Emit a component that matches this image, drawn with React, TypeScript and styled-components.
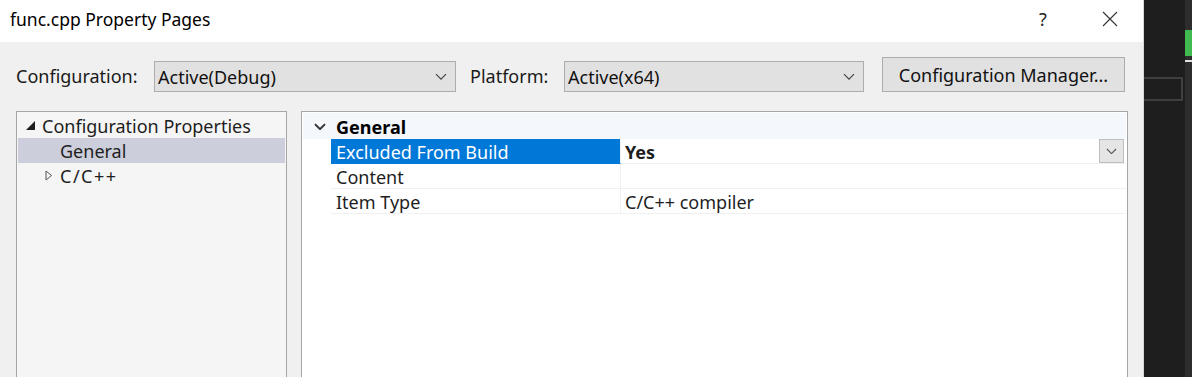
import React from "react";
import styled, { createGlobalStyle } from "styled-components";

const Global = createGlobalStyle`
  html, body { margin: 0; padding: 0; background: #1e1e1e; }
  body { font-family: "Noto Sans", "Open Sans", sans-serif; font-size: 18px; color: #000; }
  * { box-sizing: border-box; }
`;

const Screen = styled.div`
  display: flex;
  width: 1192px;
  height: 377px;
  overflow: hidden;
`;

const Dialog = styled.div`
  width: 1144px;
  height: 377px;
  background: #f0f0f0;
  display: flex;
  flex-direction: column;
  border-right: 1px solid #d8d8d8;
`;

const TitleBar = styled.div`
  height: 42px;
  background: #fff;
  display: flex;
  align-items: center;
  padding-left: 10px;
`;

const Title = styled.div`
  flex: 1;
  font-size: 17.5px;
  margin-top: -4px;
`;

const TitleButton = styled.div<{ $w: number; $mr: number }>`
  width: ${(p) => p.$w}px;
  margin-right: ${(p) => p.$mr}px;
  display: flex;
  align-items: center;
  justify-content: center;
  font-size: 18px;
  color: #222;
  margin-top: -4px;
`;

const Body = styled.div`
  flex: 1;
  display: flex;
  flex-direction: column;
  padding: 15px 0 0 16px;
`;

const Toolbar = styled.div`
  display: flex;
  align-items: flex-end;
  height: 35px;
`;

const Label = styled.div<{ $w: number }>`
  width: ${(p) => p.$w}px;
  height: 31px;
  line-height: 31px;
  font-size: 18px;
  color: #1a1a1a;
`;

const Combo = styled.div<{ $w: number; $mr: number }>`
  width: ${(p) => p.$w}px;
  margin-right: ${(p) => p.$mr}px;
  height: 31px;
  background: #e1e1e1;
  border: 1px solid #adadad;
  display: flex;
  align-items: center;
  padding-left: 3px;
  padding-right: 8px;
  font-size: 18px;
  color: #111;
`;

const ComboText = styled.div`
  flex: 1;
`;

const Button = styled.div`
  width: 243px;
  height: 35px;
  background: #e1e1e1;
  border: 1px solid #adadad;
  display: flex;
  align-items: center;
  justify-content: center;
  font-size: 18px;
  color: #111;
`;

const Panels = styled.div`
  display: flex;
  gap: 14px;
  margin-top: 19px;
  flex: 1;
`;

const Tree = styled.div`
  width: 271px;
  background: #f5f5f5;
  border: 1px solid #a6a6a6;
  border-bottom: none;
  padding: 1px 1px 0 1px;
  display: flex;
  flex-direction: column;
`;

const TreeRow = styled.div<{ $indent: number; $selected?: boolean }>`
  height: 25px;
  display: flex;
  align-items: center;
  padding-left: ${(p) => p.$indent}px;
  background: ${(p) => (p.$selected ? "#cccedb" : "transparent")};
  font-size: 18px;
  color: #1e1e1e;
`;

const Glyph = styled.span<{ $w: number }>`
  width: ${(p) => p.$w}px;
  display: inline-flex;
  align-items: center;
`;

const Wide = styled.span`
  letter-spacing: 1.5px;
`;

const Grid = styled.div`
  width: 827px;
  background: #fff;
  border: 1px solid #a6a6a6;
  border-bottom: none;
  padding: 1px 1px 0 1px;
  display: flex;
  flex-direction: column;
`;

const CategoryRow = styled.div`
  height: 26px;
  background: #f4f7fc;
  display: flex;
  align-items: center;
  font-weight: 700;
  font-size: 18px;
  padding-top: 1px;
`;

const CategoryToggle = styled.div`
  width: 33px;
  display: flex;
  align-items: center;
  justify-content: center;
`;

const PropRow = styled.div`
  height: 25px;
  display: flex;
  padding-left: 28px;
`;

const NameCell = styled.div<{ $selected?: boolean }>`
  width: 290px;
  display: flex;
  align-items: center;
  padding: 2px 0 0 5px;
  background: ${(p) => (p.$selected ? "#0078d7" : "#fff")};
  color: ${(p) => (p.$selected ? "#fff" : "#1e1e1e")};
  border-bottom: 1px solid ${(p) => (p.$selected ? "#0078d7" : "#f0f0f0")};
  border-right: 1px solid #f0f0f0;
  font-size: 18px;
`;

const ValueCell = styled.div<{ $bold?: boolean }>`
  flex: 1;
  display: flex;
  align-items: center;
  padding: 2px 0 0 4px;
  font-weight: ${(p) => (p.$bold ? 700 : 400)};
  border-bottom: 1px solid #f0f0f0;
  font-size: 18px;
  color: #1e1e1e;
`;

const ValueText = styled.div`
  flex: 1;
`;

const DropButton = styled.div`
  width: 25px;
  height: 24px;
  margin-top: -2px;
  background: #e5e5e5;
  border: 1px solid #bdbdbd;
  display: flex;
  align-items: center;
  justify-content: center;
  margin-right: 2px;
`;

const DarkSide = styled.div`
  width: 48px;
  height: 377px;
  display: flex;
  background: #1e1e1e;
`;

const DarkMain = styled.div`
  width: 41px;
  display: flex;
  flex-direction: column;
  padding-top: 77px;
`;

const DarkBox = styled.div`
  width: 39px;
  height: 24px;
  border: 2px solid #3f3f3f;
  border-left: none;
`;

const DarkStripe = styled.div`
  width: 7px;
  background: #2d2d2d;
  display: flex;
  flex-direction: column;
  padding-top: 30px;
`;

const GreenMark = styled.div`
  height: 26px;
  background: #3fb950;
`;

const WhiteMark = styled.div`
  height: 2px;
  margin-top: 4px;
  background: #e0e0e0;
`;

const Chevron = ({ size = 12, color = "#444", weight = 1.2 }: { size?: number; color?: string; weight?: number }) => (
  <svg width={size} height={size * 0.6} viewBox="0 0 12 7">
    <path d="M1 1 L6 6 L11 1" fill="none" stroke={color} strokeWidth={weight} />
  </svg>
);

export default function App() {
  return (
    <>
      <Global />
      <Screen>
        <Dialog>
          <TitleBar>
            <Title>func.cpp Property Pages</Title>
            <TitleButton $w={40} $mr={30}>?</TitleButton>
            <TitleButton $w={34} $mr={16}>
              <svg width="16" height="16" viewBox="0 0 16 16">
                <path d="M1 1 L15 15 M15 1 L1 15" stroke="#333" strokeWidth="1.1" />
              </svg>
            </TitleButton>
          </TitleBar>
          <Body>
            <Toolbar>
              <Label $w={138}>Configuration:</Label>
              <Combo $w={302} $mr={14}>
                <ComboText>Active(Debug)</ComboText>
                <Chevron />
              </Combo>
              <Label $w={94}>Platform:</Label>
              <Combo $w={300} $mr={18}>
                <ComboText>Active(x64)</ComboText>
                <Chevron />
              </Combo>
              <Button>Configuration Manager...</Button>
            </Toolbar>
            <Panels>
              <Tree>
                <TreeRow $indent={8}>
                  <Glyph $w={16}>
                    <svg width="9" height="9" viewBox="0 0 9 9">
                      <path d="M9 0 L9 9 L0 9 Z" fill="#1e1e1e" />
                    </svg>
                  </Glyph>
                  Configuration Properties
                </TreeRow>
                <TreeRow $indent={42} $selected>
                  General
                </TreeRow>
                <TreeRow $indent={27}>
                  <Glyph $w={15}>
                    <svg width="8" height="11" viewBox="0 0 8 11">
                      <path d="M1 1 L6.5 5.5 L1 10 Z" fill="none" stroke="#555" strokeWidth="1" />
                    </svg>
                  </Glyph>
                  <Wide>C/C++</Wide>
                </TreeRow>
              </Tree>
              <Grid>
                <CategoryRow>
                  <CategoryToggle>
                    <Chevron size={12} color="#333" weight={2} />
                  </CategoryToggle>
                  General
                </CategoryRow>
                <PropRow>
                  <NameCell $selected>Excluded From Build</NameCell>
                  <ValueCell $bold>
                    <ValueText>Yes</ValueText>
                    <DropButton>
                      <Chevron size={11} color="#555" />
                    </DropButton>
                  </ValueCell>
                </PropRow>
                <PropRow>
                  <NameCell>Content</NameCell>
                  <ValueCell />
                </PropRow>
                <PropRow>
                  <NameCell>Item Type</NameCell>
                  <ValueCell>C/C++ compiler</ValueCell>
                </PropRow>
              </Grid>
            </Panels>
          </Body>
        </Dialog>
        <DarkSide>
          <DarkMain>
            <DarkBox />
          </DarkMain>
          <DarkStripe>
            <GreenMark />
            <WhiteMark />
          </DarkStripe>
        </DarkSide>
      </Screen>
    </>
  );
}
